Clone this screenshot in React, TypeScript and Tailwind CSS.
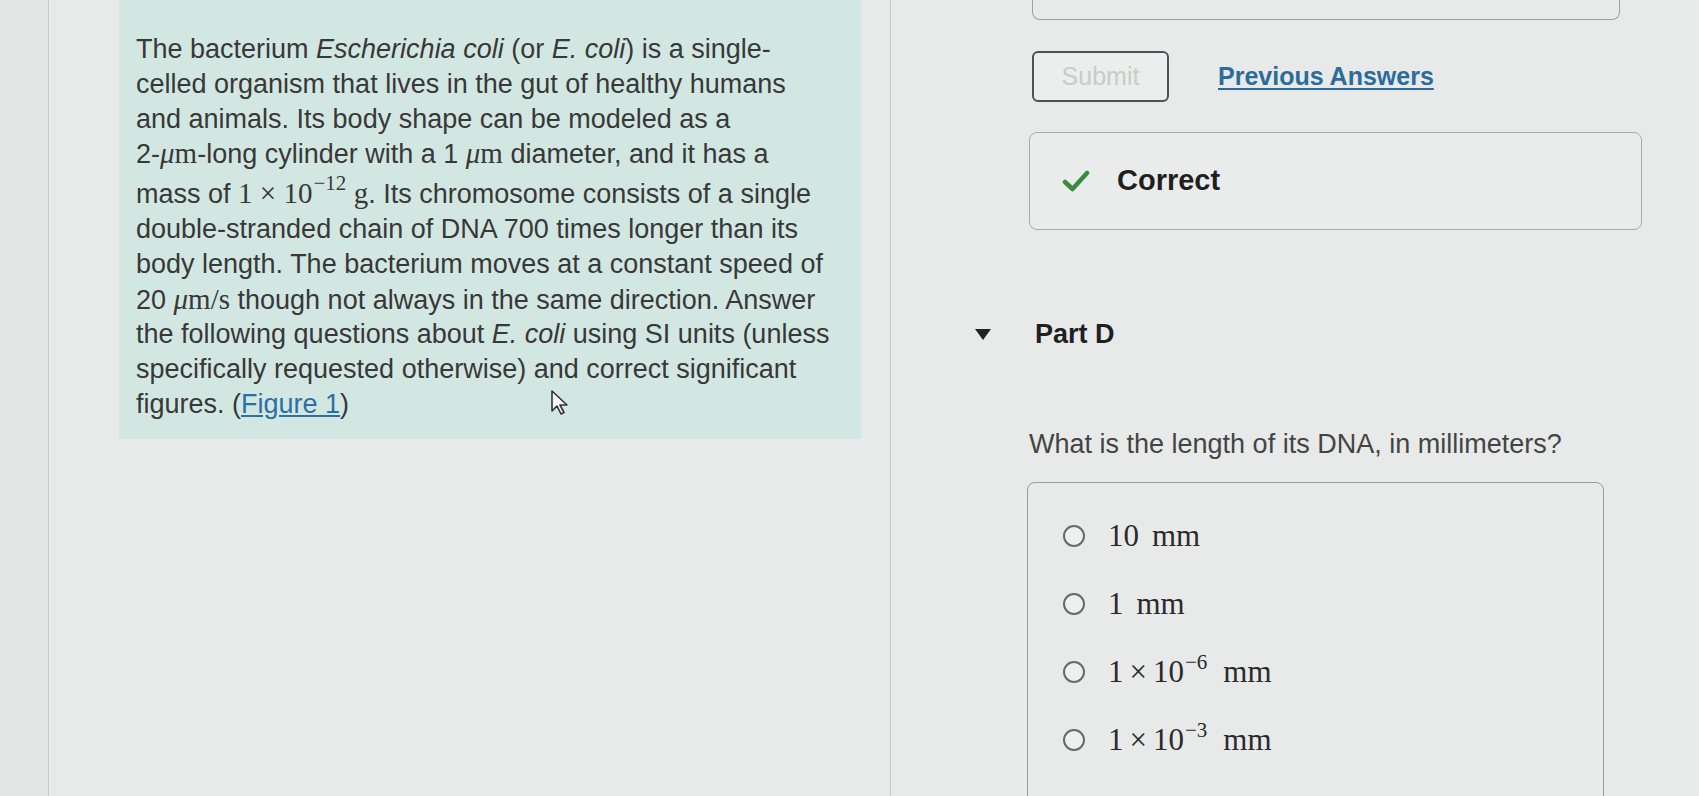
import type { ReactNode } from "react";

const serif = "font-['Liberation_Serif','Times_New_Roman',serif]";

function M({ children, className = "" }: { children: ReactNode; className?: string }) {
  return <span className={`${serif} text-[29px] ${className}`}>{children}</span>;
}

function Mu() {
  return (
    <M>
      <i>μ</i>m
    </M>
  );
}

function Sup({ children }: { children: ReactNode }) {
  return <sup className={`${serif} relative top-[-13px] ml-[1px] align-baseline text-[21px]`}>{children}</sup>;
}

const options: ReactNode[] = [
  <>
    10<span className="ml-[13px]">mm</span>
  </>,
  <>
    1<span className="ml-[13px]">mm</span>
  </>,
  <>
    1<span className="mx-[6px]">×</span>10<Sup>−6</Sup>
    <span className="ml-[16px]">mm</span>
  </>,
  <>
    1<span className="mx-[6px]">×</span>10<Sup>−3</Sup>
    <span className="ml-[16px]">mm</span>
  </>
];

export default function App() {
  return (
    <div className="flex h-[796px] w-full overflow-hidden bg-[#e8eae9] font-['Liberation_Sans',Arial,sans-serif] text-[#383838]">
      <div className="w-[48px] shrink-0 bg-[#e4e6e5]" />

      {/* intro column */}
      <div className="w-[843px] shrink-0 border-x border-[#c9cccb]">
        <div className="relative ml-[70px] h-[439px] w-[742px] bg-[#d3e7e2] pl-[17px] pt-[32px] text-[27px] leading-[34.8px]">
          <div className="whitespace-nowrap">
            The bacterium <i>Escherichia coli</i> (or <i>E. coli</i>) is a single-
          </div>
          <div className="whitespace-nowrap">celled organism that lives in the gut of healthy humans</div>
          <div className="whitespace-nowrap">and animals. Its body shape can be modeled as a</div>
          <div className="whitespace-nowrap">
            2-<Mu />-long cylinder with a 1 <Mu /> diameter, and it has a
          </div>
          <div className="mt-[4px] whitespace-nowrap">
            mass of <M>1 × 10</M>
            <Sup>−12</Sup> <M>g</M>. Its chromosome consists of a single
          </div>
          <div className="whitespace-nowrap">double-stranded chain of DNA 700 times longer than its</div>
          <div className="whitespace-nowrap">body length. The bacterium moves at a constant speed of</div>
          <div className="whitespace-nowrap">
            20 <M>
              <i>μ</i>m/s
            </M>{" "}
            though not always in the same direction. Answer
          </div>
          <div className="whitespace-nowrap">
            the following questions about <i>E. coli</i> using SI units (unless
          </div>
          <div className="whitespace-nowrap">specifically requested otherwise) and correct significant</div>
          <div className="whitespace-nowrap">
            figures. (<span className="text-[#2a6fa5] underline">Figure 1</span>)
          </div>

          <svg className="absolute left-[431px] top-[389px]" width="22" height="28" viewBox="0 0 22 28">
            <path
              d="M2 2 L2 22 L7 17 L11 25 L14 23.5 L10 16 L17 16 Z"
              fill="#f4f7f6"
              stroke="#333"
              strokeWidth="1.6"
              strokeLinejoin="round"
            />
          </svg>
        </div>
      </div>

      {/* question column */}
      <div className="flex-1 pl-[141px]">
        <div className="h-[20px] w-[588px] rounded-b-lg border-x border-b border-[#9ea1a0]" />

        <div className="mt-[31px] flex items-center">
          <button
            className="flex h-[51px] w-[137px] items-center justify-center rounded-md border-2 border-[#4f5254] bg-[#eceeed] text-[25px] text-[#c9cbca]"
            type="button"
          >
            Submit
          </button>
          <span className="ml-[49px] text-[25px] font-bold text-[#2b6c9c] underline underline-offset-[3px]">
            Previous Answers
          </span>
        </div>

        <div className="ml-[-3px] mt-[30px] flex h-[98px] w-[613px] items-center rounded-lg border border-[#a9acab] bg-[#eaecec] pl-[32px]">
          <svg width="28" height="24" viewBox="0 0 28 24">
            <path
              d="M3 13 L10.5 20 L25 4"
              fill="none"
              stroke="#3b8a40"
              strokeWidth="4.5"
              strokeLinecap="round"
              strokeLinejoin="round"
            />
          </svg>
          <span className="ml-[27px] text-[29px] font-bold text-[#1f1f22]">Correct</span>
        </div>

        <div className="ml-[-57px] mt-[87px] flex h-[34px] items-center">
          <svg width="16" height="11" viewBox="0 0 16 11">
            <path d="M0 0 L16 0 L8 11 Z" fill="#222" />
          </svg>
          <span className="ml-[44px] text-[27px] font-bold text-[#1f1f22]">Part D</span>
        </div>

        <div className="ml-[-3px] mt-[76px] h-[34px] whitespace-nowrap text-[27px] leading-[34px] text-[#444]">
          What is the length of its DNA, in millimeters?
        </div>

        <div className="ml-[-5px] mt-[21px] h-[340px] w-[577px] rounded-lg border-[1.5px] border-[#9a9d9c] pl-[35px] pt-[19px]">
          {options.map((label, i) => (
            <div className="flex h-[68px] items-center" key={i}>
              <span className="h-[22px] w-[22px] shrink-0 rounded-full border-2 border-[#666a69] bg-[#eef0ef]" />
              <span className={`${serif} ml-[23px] text-[31px] text-[#2a2a2e]`}>{label}</span>
            </div>
          ))}
        </div>
      </div>
    </div>
  );
}
